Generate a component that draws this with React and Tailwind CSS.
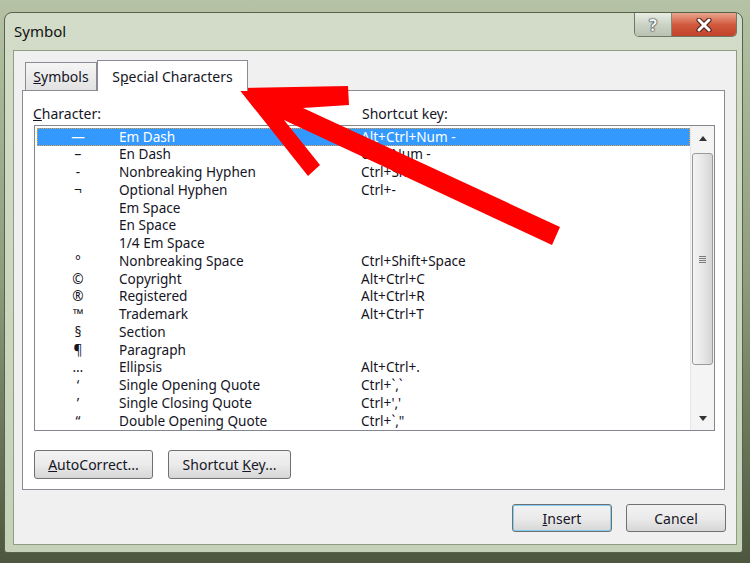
import React from 'react';

const rows = [
  ['—', 'Em Dash', 'Alt+Ctrl+Num -'],
  ['–', 'En Dash', 'Ctrl+Num -'],
  ['-', 'Nonbreaking Hyphen', 'Ctrl+Shift+_'],
  ['¬', 'Optional Hyphen', 'Ctrl+-'],
  ['', 'Em Space', ''],
  ['', 'En Space', ''],
  ['', '1/4 Em Space', ''],
  ['°', 'Nonbreaking Space', 'Ctrl+Shift+Space'],
  ['©', 'Copyright', 'Alt+Ctrl+C'],
  ['®', 'Registered', 'Alt+Ctrl+R'],
  ['™', 'Trademark', 'Alt+Ctrl+T'],
  ['§', 'Section', ''],
  ['¶', 'Paragraph', ''],
  ['…', 'Ellipsis', 'Alt+Ctrl+.'],
  ['‘', 'Single Opening Quote', 'Ctrl+`,`'],
  ['’', 'Single Closing Quote', "Ctrl+','"],
  ['“', 'Double Opening Quote', 'Ctrl+`,"'],
];

const btn =
  'h-full flex items-center justify-center rounded-[3px] border border-[#707070] bg-gradient-to-b from-[#f2f2f2] via-[#ebebeb] to-[#d6d6d6] text-[14px] text-[#151525]';

const Row = ({ row, selected }) => (
  <div
    className={
      'h-[17.75px] flex items-center text-[13.6px] ' +
      (selected
        ? 'bg-[#3399ff] text-white outline-1 outline-dotted outline-[#e8a040] -outline-offset-1'
        : 'text-[#151525]')
    }
  >
    <span className="w-[82px] text-center">{row[0]}</span>
    <span className="w-[242px]">{row[1]}</span>
    <span>{row[2]}</span>
  </div>
);

const App = () => {
  return (
    <div className="relative w-[750px] h-[563px] overflow-hidden bg-gradient-to-b from-[#b6c2a5] via-[#8e9b7d] to-[#4d573f] pt-[12px] pl-[4px] font-['Noto_Sans',sans-serif]">
      {/* window frame */}
      <div className="w-[739px] h-[541px] rounded-t-[8px] rounded-b-[3px] border border-[#56634a] bg-gradient-to-b from-[#d3dcc8] to-[#c5d2b8] flex flex-col">
        <div className="h-[37px] flex items-start justify-between">
          <span className="ml-[9px] mt-[7px] text-[15px] text-[#111]">Symbol</span>
          <div className="mr-[5px] flex h-[24px] rounded-b-[5px] overflow-hidden border border-t-0 border-[#6d7868]">
            <div className="w-[37px] flex items-center justify-center bg-gradient-to-b from-[#e9ede4] via-[#ccd3c6] to-[#b9c2b2] border-r border-[#7f8a78]">
              <span className="text-[16px] leading-none font-bold text-[#f4f4f4] [text-shadow:0_0_2px_#2b3440,0_0_1px_#2b3440,0_0_1px_#2b3440]">?</span>
            </div>
            <div className="w-[64px] flex items-center justify-center bg-gradient-to-b from-[#e8a58f] via-[#d15a3e] to-[#c0422a]">
              <svg width="18" height="14" viewBox="0 0 18 14">
                <path d="M4 2 L14 12 M14 2 L4 12" stroke="#4a1d15" strokeWidth="5" strokeLinecap="round" />
                <path d="M4 2 L14 12 M14 2 L4 12" stroke="#ffffff" strokeWidth="3" strokeLinecap="round" />
              </svg>
            </div>
          </div>
        </div>

        {/* client area */}
        <div className="ml-[8px] w-[724px] h-[495px] border border-[#8f9c86] bg-[#f0f0f0] flex flex-col">
          {/* tabs */}
          <div className="mt-[9px] ml-[11px] h-[30px] flex items-end">
            <div className="w-[72px] h-[28px] border border-b-0 border-[#898c95] bg-gradient-to-b from-[#f5f5f5] to-[#e2e2e2] flex items-center justify-center text-[14px] text-[#151525]">
              <span><span className="underline">S</span>ymbols</span>
            </div>
            <div className="relative z-10 -mb-[1px] w-[151px] h-[31px] border border-b-0 border-[#898c95] bg-white flex items-center justify-center text-[14px] text-[#151525]">
              <span>S<span className="underline">p</span>ecial Characters</span>
            </div>
          </div>

          {/* tab panel */}
          <div className="ml-[8px] w-[703px] h-[400px] border border-[#898c95] bg-white flex flex-col">
            <div className="mt-[13px] h-[18px] flex items-center text-[14px] text-[#151525]">
              <span className="ml-[10px] w-[329px]"><span className="underline">C</span>haracter:</span>
              <span>Shortcut key:</span>
            </div>

            <div className="mt-[3px] ml-[11px] w-[681px] h-[306px] border border-[#828790] flex">
              <div className="w-[655px] pl-[2px] pt-[2px]">
                {rows.map((r, i) => (
                  <Row key={i} row={r} selected={i === 0} />
                ))}
              </div>
              <div className="w-[24px] flex flex-col bg-[#f4f4f4] border-l border-[#e6e6e6]">
                <div className="h-[24px] flex items-center justify-center">
                  <svg width="8" height="5" viewBox="0 0 8 5"><path d="M0 5 L4 0 L8 5 Z" fill="#333" /></svg>
                </div>
                <div className="flex-1">
                  <div className="mt-[3px] mx-[1px] h-[212px] rounded-[3px] border border-[#9a9a9a] bg-gradient-to-r from-[#f4f4f4] via-[#e8e8e8] to-[#d5d5d5] flex flex-col items-center justify-center gap-[1px]">
                    <div className="w-[7px] h-[1px] bg-[#7a7a7a]" />
                    <div className="w-[7px] h-[1px] bg-[#7a7a7a]" />
                    <div className="w-[7px] h-[1px] bg-[#7a7a7a]" />
                    <div className="w-[7px] h-[1px] bg-[#7a7a7a]" />
                  </div>
                </div>
                <div className="h-[24px] flex items-center justify-center">
                  <svg width="8" height="5" viewBox="0 0 8 5"><path d="M0 0 L8 0 L4 5 Z" fill="#333" /></svg>
                </div>
              </div>
            </div>

            <div className="mt-[19px] ml-[11px] h-[29px] flex gap-[15px]">
              <button className={btn + ' w-[119px]'}>
                <span><span className="underline">A</span>utoCorrect...</span>
              </button>
              <button className={btn + ' w-[123px]'}>
                <span>Shortcut <span className="underline">K</span>ey...</span>
              </button>
            </div>
          </div>

          {/* dialog buttons */}
          <div className="mt-[14px] h-[28px] flex justify-end gap-[14px] mr-[10px]">
            <button className={btn + ' w-[100px] border-[#3c7fb1] shadow-[inset_0_0_0_1px_#7fd0f5]'}>
              <span><span className="underline">I</span>nsert</span>
            </button>
            <button className={btn + ' w-[100px]'}>Cancel</button>
          </div>
        </div>
      </div>

      {/* red arrow annotation */}
      <svg className="absolute left-0 top-0 pointer-events-none" width="750" height="563" viewBox="0 0 750 563">
        <polygon
          points="238,88 348,86 349,105 303,108 560,227 552,245 284,120 320,165 308,176"
          fill="#ff0000"
        />
      </svg>
    </div>
  );
};

export default App;
